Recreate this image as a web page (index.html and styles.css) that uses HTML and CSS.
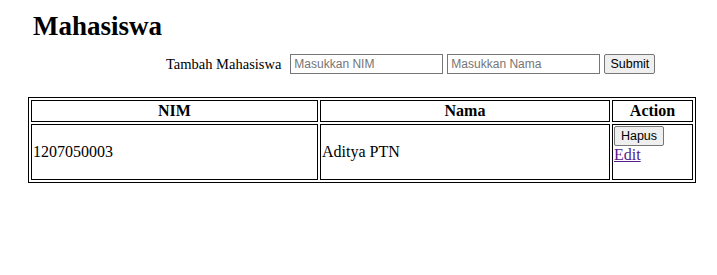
FILE: index.html
```html
<!DOCTYPE html>
<html>
<head>
<meta charset="utf-8">
<title>Mahasiswa</title>
<link rel="stylesheet" href="styles.css">
</head>
<body>
<div class="page">
  <h1 class="title">Mahasiswa</h1>
  <form class="add-form">
    <label class="add-label">Tambah Mahasiswa</label>
    <input class="field" type="text" placeholder="Masukkan NIM">
    <input class="field" type="text" placeholder="Masukkan Nama">
    <button class="btn btn-submit" type="button">Submit</button>
  </form>
  <table class="data-table">
    <thead>
      <tr>
        <th class="col-nim">NIM</th>
        <th class="col-nama">Nama</th>
        <th class="col-action">Action</th>
      </tr>
    </thead>
    <tbody>
      <tr>
        <td class="cell">1207050003</td>
        <td class="cell">Aditya PTN</td>
        <td class="cell cell-action">
          <button class="btn btn-hapus" type="button">Hapus</button><br>
          <a class="edit-link" href="#">Edit</a>
        </td>
      </tr>
    </tbody>
  </table>
</div>
</body>
</html>
```

FILE: styles.css
```css
html, body {
  margin: 0;
  padding: 0;
  background: #ffffff;
}

body {
  font-family: "Liberation Serif", "Times New Roman", serif;
  font-size: 16px;
  color: #000000;
}

.page {
  padding: 10px 21px 0 28px;
}

.title {
  margin: 0 0 0 5px;
  font-size: 27px;
  line-height: 32px;
  font-weight: bold;
}

.add-form {
  display: flex;
  align-items: center;
  height: 20px;
  margin-top: 12px;
  padding-left: 138px;
  gap: 4px;
}

.add-label {
  font-size: 14.5px;
  margin-right: 5px;
  line-height: 20px;
}

.field {
  box-sizing: border-box;
  width: 153px;
  height: 20px;
  margin: 0;
  padding: 1px 3px;
  border: 1px solid #767676;
  border-radius: 0;
  font-family: "Liberation Sans", Arial, sans-serif;
  font-size: 12px;
  color: #000;
  background: #fff;
}

.field::placeholder {
  color: #757575;
}

.btn {
  box-sizing: border-box;
  height: 20px;
  margin: 0;
  padding: 0 5px;
  border: 1px solid #767676;
  border-radius: 2px;
  background: #efefef;
  font-family: "Liberation Sans", Arial, sans-serif;
  font-size: 12.5px;
  color: #000;
}

.btn-submit {
  width: 51px;
}

.data-table {
  margin-top: 23px;
  width: 668px;
  table-layout: fixed;
  border: 1px solid #000;
  border-spacing: 2px;
}

.data-table th,
.data-table td {
  border: 1px solid #000;
  padding: 1px;
}

.data-table th {
  height: 18px;
  line-height: 18px;
  font-weight: bold;
  text-align: center;
}

.col-nim {
  width: 283px;
}

.col-nama {
  width: 286px;
}

.col-action {
  width: 77px;
}

.cell {
  height: 52px;
  vertical-align: middle;
  text-align: left;
}

.cell-action {
  vertical-align: top;
}

.btn-hapus {
  width: 50px;
}

.edit-link {
  color: #551a8b;
  text-decoration: underline;
}
```
